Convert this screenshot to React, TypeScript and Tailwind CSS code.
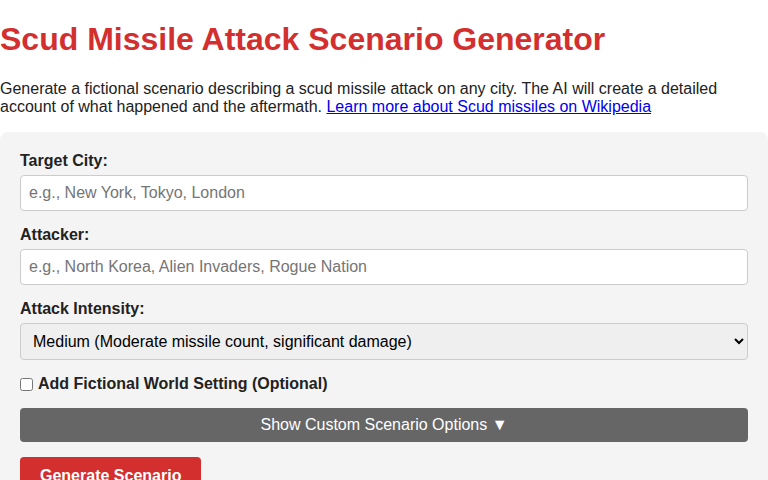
import { useState } from 'react';

const intensityOptions = [
  'Low (Few missiles, limited damage)',
  'Medium (Moderate missile count, significant damage)',
  'High (Massive barrage, catastrophic damage)',
];

export default function App() {
  const [city, setCity] = useState('');
  const [attacker, setAttacker] = useState('');
  const [intensity, setIntensity] = useState(intensityOptions[1]);
  const [worldSetting, setWorldSetting] = useState(false);
  const [showCustom, setShowCustom] = useState(false);

  return (
    <div className="min-h-screen bg-white text-[#222] font-['Liberation_Sans',Arial,sans-serif] text-base leading-[normal]">
      <h1 className="text-[32px] font-bold leading-[normal] text-[#d32f2f] mt-[21px] mb-[22px]">
        Scud Missile Attack Scenario Generator
      </h1>
      <p className="leading-[normal] mb-4">
        Generate a fictional scenario describing a scud missile attack on any city. The AI will create a detailed
        account of what happened and the aftermath.{' '}
        <a href="#" className="text-[#0000ee] underline">
          Learn more about Scud missiles on Wikipedia
        </a>
      </p>

      {/* Form panel */}
      <div className="bg-[#f4f4f4] rounded-lg p-5">
        <div className="mb-[15px]">
          <label className="block font-bold leading-[normal] mb-[5px]">Target City:</label>
          <input
            type="text"
            value={city}
            onChange={(e) => setCity(e.target.value)}
            placeholder="e.g., New York, Tokyo, London"
            className="block w-full bg-white border border-[#ccc] rounded-[4px] p-2 leading-[normal] placeholder:text-[#757575] outline-none"
          />
        </div>

        <div className="mb-[15px]">
          <label className="block font-bold leading-[normal] mb-[5px]">Attacker:</label>
          <input
            type="text"
            value={attacker}
            onChange={(e) => setAttacker(e.target.value)}
            placeholder="e.g., North Korea, Alien Invaders, Rogue Nation"
            className="block w-full bg-white border border-[#ccc] rounded-[4px] p-2 leading-[normal] placeholder:text-[#757575] outline-none"
          />
        </div>

        <div className="mb-[15px]">
          <label className="block font-bold leading-[normal] mb-[5px]">Attack Intensity:</label>
          <select
            value={intensity}
            onChange={(e) => setIntensity(e.target.value)}
            className="block w-full bg-[#efefef] border border-[#ccc] rounded-[4px] p-2 leading-[normal] text-black"
          >
            {intensityOptions.map((opt) => (
              <option key={opt} value={opt}>
                {opt}
              </option>
            ))}
          </select>
        </div>

        <div className="mb-[15px]">
          <label className="flex items-center font-bold leading-[normal]">
            <input
              type="checkbox"
              checked={worldSetting}
              onChange={(e) => setWorldSetting(e.target.checked)}
              className="w-[13px] h-[13px] mr-[5px]"
            />
            Add Fictional World Setting (Optional)
          </label>
        </div>

        <button
          type="button"
          onClick={() => setShowCustom(!showCustom)}
          className="block w-full bg-[#666] text-white rounded-[4px] p-2 leading-[normal] text-center mb-[15px]"
        >
          {showCustom ? 'Hide Custom Scenario Options ▲' : 'Show Custom Scenario Options ▼'}
        </button>

        <button
          type="button"
          className="bg-[#d32f2f] text-white font-bold rounded-[4px] px-5 py-[10px] leading-[normal]"
        >
          Generate Scenario
        </button>
      </div>
    </div>
  );
}
